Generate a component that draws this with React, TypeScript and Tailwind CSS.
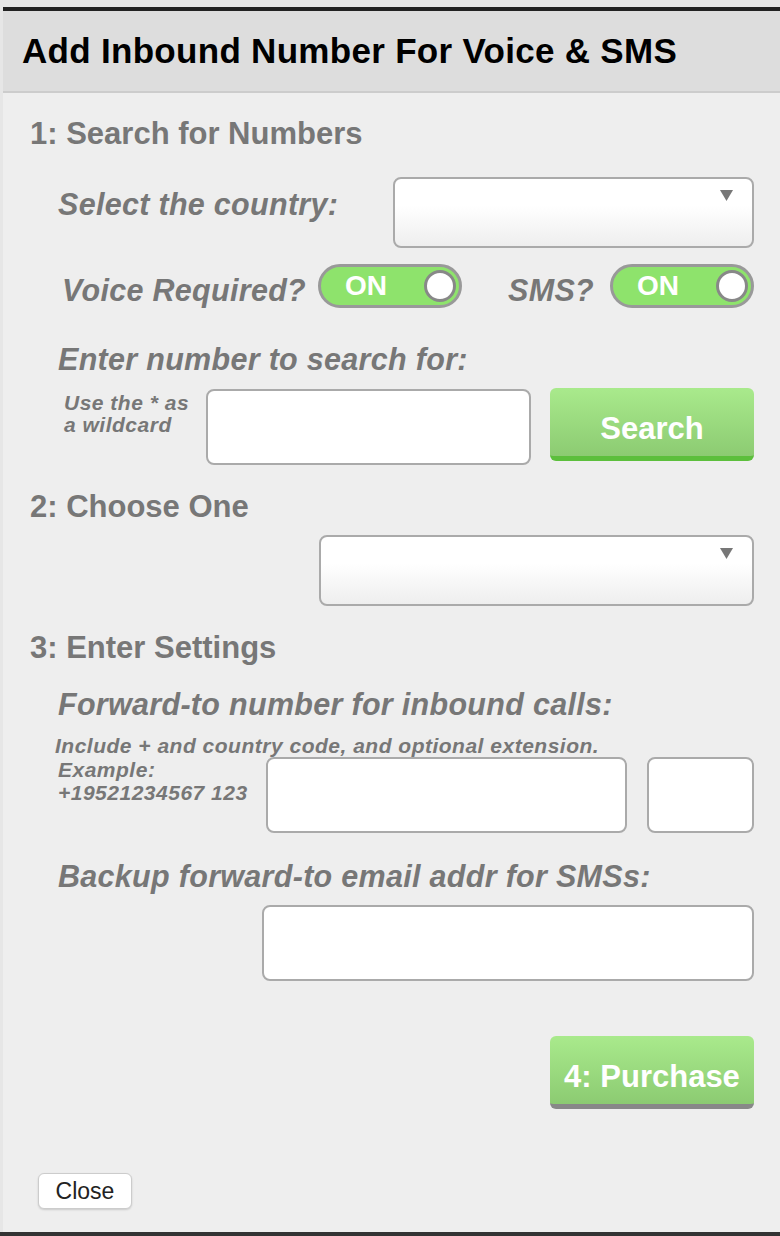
const sans = "font-['Liberation_Sans',sans-serif]"
const label = 'text-[30.5px] font-bold italic leading-[36px] tracking-[0.3px]'
const small = 'text-[21px] font-bold italic tracking-[0.5px]'
const heading = 'text-[31px] font-bold leading-[36px]'

function Toggle() {
  return (
    <div className="flex h-[44px] w-[144px] items-center justify-between rounded-full border-[3px] border-[#999] bg-[#8ee36c] pl-[24px] pr-[3px]">
      <span className="text-[28px] font-bold leading-none text-white">ON</span>
      <span className="h-[32px] w-[32px] rounded-full border-[3px] border-[#888] bg-white" />
    </div>
  )
}

function SelectBox({ width }: { width: string }) {
  return (
    <div
      className={`relative h-[71px] ${width} rounded-[8px] border-2 border-[#aaa] bg-gradient-to-b from-white from-40% to-[#eeeeee]`}
    >
      <svg className="absolute right-[19px] top-[11px]" width="13" height="11" viewBox="0 0 13 11">
        <polygon points="0,0 13,0 6.5,11" fill="#777" />
      </svg>
    </div>
  )
}

function GreenButton({ text, edge }: { text: string; edge: string }) {
  return (
    <button
      className={`h-[73px] w-[204px] rounded-[6px] border-b-[5px] ${edge} bg-gradient-to-b from-[#a9ea8c] to-[#8ccb72] pt-[14px] text-[31px] font-bold text-white`}
    >
      {text}
    </button>
  )
}

export default function App() {
  return (
    <div className={`h-[1236px] w-[780px] overflow-hidden bg-[#e6e6e6] pt-[7px] ${sans}`}>
      <div className="ml-[3px] flex h-[1225px] flex-col border-t-4 border-[#222] bg-[#eeeeee]">
        <div className="flex h-[82px] shrink-0 items-center border-b-2 border-[#cccccc] bg-[#dddddd] pl-[19px]">
          <h1 className="text-[35px] font-bold tracking-[0.3px] text-black">
            Add Inbound Number For Voice &amp; SMS
          </h1>
        </div>

        <div className="flex flex-1 flex-col pl-[27px] pr-[26px] text-[#777]">
          <h2 className={`mt-[23px] ${heading}`}>1: Search for Numbers</h2>

          <div className="mt-[25px] flex items-start justify-between pl-[28px]">
            <span className={`pt-[9px] ${label}`}>Select the country:</span>
            <SelectBox width="w-[361px]" />
          </div>

          <div className="mt-[16px] flex items-center pl-[32px]">
            <span className={`mt-[8px] ${label}`}>Voice Required?</span>
            <div className="ml-auto">
              <Toggle />
            </div>
            <span className={`ml-[46px] mt-[8px] ${label}`}>SMS?</span>
            <div className="ml-[16px]">
              <Toggle />
            </div>
          </div>

          <div className={`mt-[33px] pl-[28px] ${label}`}>Enter number to search for:</div>

          <div className="mt-[11px] flex items-start pl-[34px]">
            <div className={`w-[142px] pt-[4px] leading-[22px] ${small}`}>
              Use the * as
              <br />a wildcard
            </div>
            <div className="mt-[1px] h-[76px] w-[325px] rounded-[8px] border-2 border-[#aaa] bg-white" />
            <div className="ml-auto">
              <GreenButton text="Search" edge="border-[#5cbf3c]" />
            </div>
          </div>

          <h2 className={`mt-[24px] ${heading}`}>2: Choose One</h2>

          <div className="mt-[10px] flex justify-end">
            <SelectBox width="w-[435px]" />
          </div>

          <h2 className={`mt-[24px] ${heading}`}>3: Enter Settings</h2>

          <div className={`mt-[20px] pl-[28px] ${label}`}>Forward-to number for inbound calls:</div>

          <div className={`mt-[12px] pl-[25px] leading-[23px] ${small}`}>
            Include + and country code, and optional extension.
          </div>

          <div className="flex items-start pl-[28px]">
            <div className={`w-[208px] pt-[1px] leading-[23px] ${small}`}>
              Example:
              <br />
              +19521234567 123
            </div>
            <div className="h-[76px] w-[361px] rounded-[8px] border-2 border-[#aaa] bg-white" />
            <div className="ml-auto h-[76px] w-[107px] rounded-[8px] border-2 border-[#aaa] bg-white" />
          </div>

          <div className={`mt-[25px] pl-[28px] ${label}`}>Backup forward-to email addr for SMSs:</div>

          <div className="mt-[11px] flex justify-end">
            <div className="h-[76px] w-[492px] rounded-[8px] border-2 border-[#aaa] bg-white" />
          </div>

          <div className="mt-[55px] flex justify-end">
            <GreenButton text="4: Purchase" edge="border-[#888888]" />
          </div>

          <div className="mt-[64px] pl-[8px]">
            <button className="h-[36px] w-[94px] rounded-[6px] border border-[#cccccc] bg-white text-[23px] text-[#222] shadow-[0_1px_2px_rgba(0,0,0,0.15)]">
              Close
            </button>
          </div>
        </div>
      </div>
      <div className="h-[4px] bg-[#333]" />
    </div>
  )
}
